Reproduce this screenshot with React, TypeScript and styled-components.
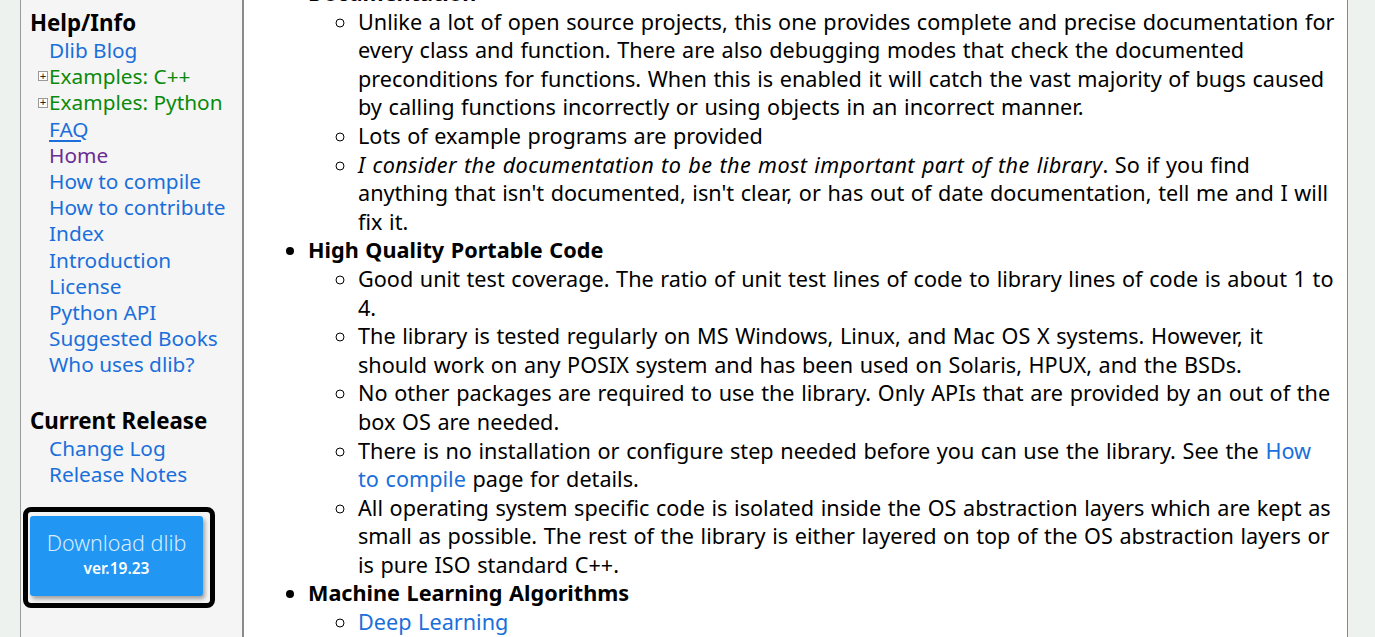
import React from 'react';
import styled, { createGlobalStyle } from 'styled-components';

const GlobalStyle = createGlobalStyle`
    html, body {
        margin: 0;
        padding: 0;
        background: #edf2ef;
        font-family: 'Noto Sans', 'Open Sans', sans-serif;
        overflow: hidden;
    }
`;

    // Layout
const Page = styled.div`
    display: flex;
    align-items: stretch;
    height: 100vh;
    padding: 0 27px 0 20px;
    overflow: hidden;
`;

const Sidebar = styled.nav`
    flex: 0 0 224px;
    background: #f5f5f5;
    border-left: 1px solid #9a9a9a;
    border-right: 2px solid #8a8a8a;
    padding: 9px 0 0 9px;
    box-sizing: border-box;
`;

const SideHeading = styled.div<{ $top?: number }>`
    font-size: 22.3px;
    font-weight: 700;
    color: #000;
    line-height: 28px;
    margin-top: ${({ $top }) => ($top ? $top : 0)}px;
`;

const SideList = styled.div`
    display: flex;
    flex-direction: column;
`;

interface SideLinkProps {
    $color?: string;
    $underline?: boolean;
}

const SideLink = styled.a<SideLinkProps>`
    display: flex;
    align-items: center;
    font-size: 20.8px;
    line-height: 26.2px;
    color: ${({ $color }) => $color || '#1a6fdb'};
    text-decoration: ${({ $underline }) => ($underline ? 'underline' : 'none')};
    text-underline-offset: 3px;
    padding-left: 19px;
    white-space: nowrap;
`;

const Expander = styled.span`
    display: inline-flex;
    align-items: center;
    justify-content: center;
    width: 8px;
    height: 8px;
    border: 1px solid #999;
    background: #fff;
    margin-left: -11px;
    margin-right: 1px;
    font-size: 9px;
    line-height: 1;
    color: #000;
    font-family: 'DejaVu Sans', sans-serif;
`;

const DownloadFrame = styled.div`
    margin: 20px 0 0 -7px;
    width: 192px;
    height: 101px;
    box-sizing: border-box;
    border: 5px solid #000;
    border-radius: 8px;
    padding: 4px 7px 0 2px;
`;

const DownloadButton = styled.a`
    display: flex;
    flex-direction: column;
    align-items: center;
    justify-content: center;
    height: 80px;
    background: #2196f3;
    border-radius: 3px;
    box-shadow: 2px 3px 4px rgba(0, 0, 0, 0.35);
    text-decoration: none;
`;

const DownloadTitle = styled.span`
    font-size: 21.5px;
    font-weight: 300;
    color: #d6ecff;
    line-height: 26px;
    margin-bottom: 2px;
    margin-top: -4px;
`;

const DownloadVersion = styled.span`
    font-size: 15.5px;
    font-weight: 600;
    color: #fff;
    line-height: 20px;
`;

const Main = styled.main`
    flex: 1;
    background: #fff;
    border-right: 1px solid #8a8a8a;
    padding: 0 10px 0 24px;
    overflow: hidden;
    font-size: 21.64px;
    word-spacing: 1px;
    line-height: 28.6px;
    color: #000;
`;

const TopList = styled.ul`
    list-style: disc;
    margin: -21px 0 0 0;
    padding-left: 40px;
`;

const Section = styled.li`
    font-weight: 700;
`;

const SubList = styled.ul`
    list-style: circle;
    margin: 0;
    padding-left: 50px;
    font-weight: 400;
`;

const Item = styled.li`
    padding-left: 0;
`;

const Emphasis = styled.i`
    letter-spacing: 0.4px;
`;

const Link = styled.a`
    color: #1a6fdb;
    text-decoration: none;
`;

const sideLinks = [
    'How to compile',
    'How to contribute',
    'Index',
    'Introduction',
    'License',
    'Python API',
    'Suggested Books',
    'Who uses dlib?',
];

export default function App() {
    return (
        <>
            <GlobalStyle />
            <Page>
                <Sidebar>
                    <SideHeading>Help/Info</SideHeading>
                    <SideList>
                        <SideLink>Dlib Blog</SideLink>
                        <SideLink $color="#0a8a0a"><Expander>+</Expander>Examples: C++</SideLink>
                        <SideLink $color="#0a8a0a"><Expander>+</Expander>Examples: Python</SideLink>
                        <SideLink $underline>FAQ</SideLink>
                        <SideLink $color="#6b2d91">Home</SideLink>
                        {sideLinks.map((l) => (
                            <SideLink key={l}>{l}</SideLink>
                        ))}
                    </SideList>
                    <SideHeading $top={29}>Current Release</SideHeading>
                    <SideList>
                        <SideLink>Change Log</SideLink>
                        <SideLink>Release Notes</SideLink>
                    </SideList>
                    <DownloadFrame>
                        <DownloadButton>
                            <DownloadTitle>Download dlib</DownloadTitle>
                            <DownloadVersion>ver.19.23</DownloadVersion>
                        </DownloadButton>
                    </DownloadFrame>
                </Sidebar>
                <Main>
                    <TopList>
                        <Section>
                            Documentation
                            <SubList>
                                <Item>
                                    Unlike a lot of open source projects, this one provides complete and precise
                                    documentation for every class and function. There are also debugging modes that
                                    check the documented preconditions for functions. When this is enabled it will
                                    catch the vast majority of bugs caused by calling functions incorrectly or using
                                    objects in an incorrect manner.
                                </Item>
                                <Item>Lots of example programs are provided</Item>
                                <Item>
                                    <Emphasis>I consider the documentation to be the most important part of the library</Emphasis>.
                                    So if you find anything that isn't documented, isn't clear, or has out of date
                                    documentation, tell me and I will fix it.
                                </Item>
                            </SubList>
                        </Section>
                        <Section>
                            High Quality Portable Code
                            <SubList>
                                <Item>
                                    Good unit test coverage. The ratio of unit test lines of code to library lines of
                                    code is about 1 to 4.
                                </Item>
                                <Item>
                                    The library is tested regularly on MS Windows, Linux, and Mac OS X systems.
                                    However, it should work on any POSIX system and has been used on Solaris, HPUX,
                                    and the BSDs.
                                </Item>
                                <Item>
                                    No other packages are required to use the library. Only APIs that are provided by
                                    an out of the box OS are needed.
                                </Item>
                                <Item>
                                    There is no installation or configure step needed before you can use the library.
                                    See the <Link>How to compile</Link> page for details.
                                </Item>
                                <Item>
                                    All operating system specific code is isolated inside the OS abstraction layers
                                    which are kept as small as possible. The rest of the library is either layered on
                                    top of the OS abstraction layers or is pure ISO standard C++.
                                </Item>
                            </SubList>
                        </Section>
                        <Section>
                            Machine Learning Algorithms
                            <SubList>
                                <Item><Link>Deep Learning</Link></Item>
                            </SubList>
                        </Section>
                    </TopList>
                </Main>
            </Page>
        </>
    );
}
